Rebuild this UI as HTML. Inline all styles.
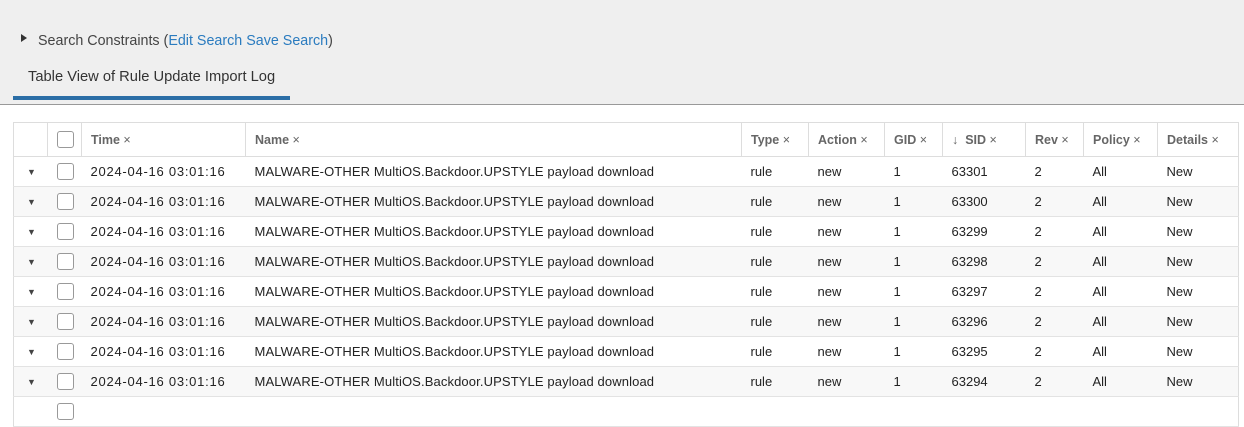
<!DOCTYPE html><html><head><style>
body{margin:0;width:1244px;height:406px;overflow:hidden;background:#fff;font-family:"Liberation Sans",sans-serif;font-size:13px;color:#222}
.top{position:absolute;left:0;top:0;width:1244px;height:104px;background:#efefef;border-bottom:1px solid #999}
.sc{position:absolute;left:38px;top:33px;font-size:14.3px;color:#444}
.sc a{color:#2a7bbf;text-decoration:none}
.tri{position:absolute;left:21px;top:34px;width:0;height:0;border-left:6px solid #333;border-top:4px solid transparent;border-bottom:4px solid transparent}
.tab{position:absolute;left:28px;top:69px;font-size:14.7px;color:#333}
.ul{position:absolute;left:13px;top:96px;width:277px;height:4px;background:#2b6ea6}
table{position:absolute;left:13px;top:122px;border-collapse:collapse;table-layout:fixed;width:1226px}
td,th{height:29px;padding:0 0 0 9px;border-bottom:1px solid #e3e3e3;text-align:left;white-space:nowrap;overflow:hidden}
th{height:33px;font-weight:bold;color:#666;font-size:12.5px;border:1px solid #ddd}
table{border:1px solid #ddd}
tr:nth-child(odd) td{background:#f8f8f8}
.cb{display:inline-block;width:15px;height:15px;border:1px solid #999;border-radius:3px;background:#fff;vertical-align:middle}
.ar{font-size:9px;color:#444;padding-left:13px}
.x{font-weight:normal;color:#666}
.t{letter-spacing:0.75px}
.n{letter-spacing:0.12px}
</style></head><body>
<div class="top"><div class="tri"></div><div class="sc">Search Constraints (<a>Edit Search</a> <a>Save Search</a>)</div><div class="tab">Table View of Rule Update Import Log</div><div class="ul"></div></div>
<table>
<colgroup><col style="width:34px"><col style="width:34px"><col style="width:164px"><col style="width:496px"><col style="width:67px"><col style="width:76px"><col style="width:58px"><col style="width:83px"><col style="width:58px"><col style="width:74px"><col style="width:81px"></colgroup>
<tr><th></th><th><span class="cb"></span></th><th>Time <span class="x">×</span></th><th>Name <span class="x">×</span></th><th>Type <span class="x">×</span></th><th>Action <span class="x">×</span></th><th>GID <span class="x">×</span></th><th>&#8595;&nbsp; SID <span class="x">×</span></th><th>Rev <span class="x">×</span></th><th>Policy <span class="x">×</span></th><th>Details <span class="x">×</span></th></tr>
<tr><td class="ar">▼</td><td><span class="cb"></span></td><td class="t">2024-04-16 03:01:16</td><td class="n">MALWARE-OTHER MultiOS.Backdoor.UPSTYLE payload download</td><td>rule</td><td>new</td><td>1</td><td>63301</td><td>2</td><td>All</td><td>New</td></tr>
<tr><td class="ar">▼</td><td><span class="cb"></span></td><td class="t">2024-04-16 03:01:16</td><td class="n">MALWARE-OTHER MultiOS.Backdoor.UPSTYLE payload download</td><td>rule</td><td>new</td><td>1</td><td>63300</td><td>2</td><td>All</td><td>New</td></tr>
<tr><td class="ar">▼</td><td><span class="cb"></span></td><td class="t">2024-04-16 03:01:16</td><td class="n">MALWARE-OTHER MultiOS.Backdoor.UPSTYLE payload download</td><td>rule</td><td>new</td><td>1</td><td>63299</td><td>2</td><td>All</td><td>New</td></tr>
<tr><td class="ar">▼</td><td><span class="cb"></span></td><td class="t">2024-04-16 03:01:16</td><td class="n">MALWARE-OTHER MultiOS.Backdoor.UPSTYLE payload download</td><td>rule</td><td>new</td><td>1</td><td>63298</td><td>2</td><td>All</td><td>New</td></tr>
<tr><td class="ar">▼</td><td><span class="cb"></span></td><td class="t">2024-04-16 03:01:16</td><td class="n">MALWARE-OTHER MultiOS.Backdoor.UPSTYLE payload download</td><td>rule</td><td>new</td><td>1</td><td>63297</td><td>2</td><td>All</td><td>New</td></tr>
<tr><td class="ar">▼</td><td><span class="cb"></span></td><td class="t">2024-04-16 03:01:16</td><td class="n">MALWARE-OTHER MultiOS.Backdoor.UPSTYLE payload download</td><td>rule</td><td>new</td><td>1</td><td>63296</td><td>2</td><td>All</td><td>New</td></tr>
<tr><td class="ar">▼</td><td><span class="cb"></span></td><td class="t">2024-04-16 03:01:16</td><td class="n">MALWARE-OTHER MultiOS.Backdoor.UPSTYLE payload download</td><td>rule</td><td>new</td><td>1</td><td>63295</td><td>2</td><td>All</td><td>New</td></tr>
<tr><td class="ar">▼</td><td><span class="cb"></span></td><td class="t">2024-04-16 03:01:16</td><td class="n">MALWARE-OTHER MultiOS.Backdoor.UPSTYLE payload download</td><td>rule</td><td>new</td><td>1</td><td>63294</td><td>2</td><td>All</td><td>New</td></tr>
<tr><td class="ar"></td><td><span class="cb"></span></td><td></td><td></td><td></td><td></td><td></td><td></td><td></td><td></td><td></td></tr>
</table>
</body></html>
